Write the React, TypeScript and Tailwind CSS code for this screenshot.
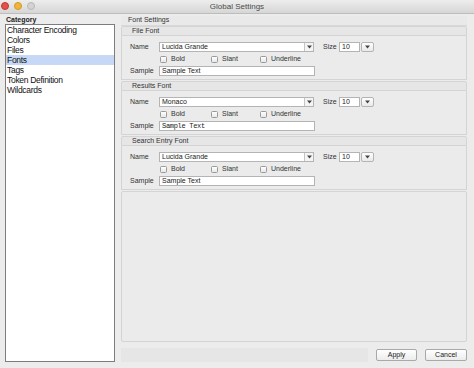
import React from 'react';

const categories = ['Character Encoding', 'Colors', 'Files', 'Fonts', 'Tags', 'Token Definition', 'Wildcards'];

const sections = [
  { title: 'File Font', font: 'Lucida Grande', mono: false },
  { title: 'Results Font', font: 'Monaco', mono: true },
  { title: 'Search Entry Font', font: 'Lucida Grande', mono: false },
];

const Arrow = () => (
  <svg width="5" height="4" viewBox="0 0 5 4">
    <path d="M0 0.5 L5 0.5 L2.5 3.5 Z" fill="#444" />
  </svg>
);

const Check = ({ label }: { label: string }) => (
  <div className="flex items-center gap-[4px]">
    <div className="w-[7px] h-[7px] rounded-[1.5px] border border-[#9a9a9a] bg-gradient-to-b from-white to-[#e8e8e8]" />
    <span className="text-[7px] text-[#333]">{label}</span>
  </div>
);

const FontSection = ({ title, font, mono }: { title: string; font: string; mono: boolean }) => (
  <div className="flex flex-col">
    <div className="h-[10px] flex items-center pl-[10px] border border-[#d4d4d4] rounded-t-[2px] bg-[#e6e6e6] text-[7px] text-[#333]">
      {title}
    </div>
    <div className="h-[44px] flex flex-col pt-[6px] pl-[8px] border border-t-0 border-[#d4d4d4] bg-[#ebebeb]">
      {/* name + size */}
      <div className="h-[10px] flex items-center">
        <span className="w-[29px] text-[7px] text-[#333]">Name</span>
        <div className="w-[155px] h-[10px] flex bg-white border border-[#b4b4b4]">
          <span className="flex-1 text-[7px] leading-[8px] pl-[2px] text-[#222]">{font}</span>
          <div className="w-[9px] flex items-center justify-center border-l border-[#c4c4c4] bg-[#f4f4f4]">
            <Arrow />
          </div>
        </div>
        <span className="ml-[9px] w-[16px] text-[7px] text-[#333]">Size</span>
        <div className="w-[21px] h-[10px] bg-white border border-[#b4b4b4] text-[7px] leading-[8px] pl-[2px] text-[#222]">10</div>
        <div className="ml-[1px] w-[13px] h-[10px] flex items-center justify-center rounded-[2px] border border-[#b4b4b4] bg-gradient-to-b from-white to-[#e9e9e9]">
          <Arrow />
        </div>
      </div>
      {/* style toggles */}
      <div className="h-[14px] flex items-center pl-[30px] pt-[1px]">
        <div className="w-[51px]"><Check label="Bold" /></div>
        <div className="w-[49px]"><Check label="Slant" /></div>
        <Check label="Underline" />
      </div>
      {/* sample */}
      <div className="h-[10px] flex items-center">
        <span className="w-[29px] text-[7px] text-[#333]">Sample</span>
        <div
          className={`w-[156px] h-[10px] bg-white border border-[#b4b4b4] text-[7px] leading-[8px] pl-[2px] text-[#222] ${
            mono ? "font-['Liberation_Mono'] tracking-[-0.3px]" : ''
          }`}
        >
          Sample Text
        </div>
      </div>
    </div>
  </div>
);

export default function App() {
  return (
    <div className="w-[474px] h-[368px] flex flex-col overflow-hidden bg-[#ececec] font-['Liberation_Sans',sans-serif]">
      {/* title bar */}
      <div className="relative h-[14px] flex items-center justify-center bg-gradient-to-b from-[#ededed] to-[#d6d6d6] border-b border-[#bdbdbd]">
        <div className="absolute left-[1px] top-[2px] flex gap-[5px]">
          <div className="w-[8px] h-[8px] rounded-full bg-[#e2534b] border border-[#c0392f]" />
          <div className="w-[8px] h-[8px] rounded-full bg-[#f1b43a] border border-[#d39a24]" />
          <div className="w-[8px] h-[8px] rounded-full bg-[#d3d3d3] border border-[#b8b8b8]" />
        </div>
        <span className="text-[8px] text-[#4a4a4a]">Global Settings</span>
      </div>

      <div className="flex-1 flex gap-[6px] pt-[2px] pl-[5px] pr-[7px] pb-[6px]">
        {/* category list */}
        <div className="w-[110px] flex flex-col">
          <div className="h-[8px] text-[7px] leading-[8px] font-bold text-[#222] pl-[1px]">Category</div>
          <div className="flex-1 bg-white border border-[#7d7d7d]">
            {categories.map((c) => (
              <div
                key={c}
                className={`h-[10px] leading-[10px] text-[8.5px] tracking-[-0.3px] pl-[1px] text-[#111] ${c === 'Fonts' ? 'bg-[#c6d8f5]' : ''}`}
              >
                {c}
              </div>
            ))}
          </div>
        </div>

        {/* font settings */}
        <div className="flex-1 flex flex-col">
          <div className="h-[10px] flex items-center pl-[7px] bg-[#e9e9e9] border-b border-[#d9d9d9] text-[7px] text-[#333]">
            Font Settings
          </div>
          <div className="flex flex-col gap-[1px]">
            {sections.map((s) => (
              <FontSection key={s.title} {...s} />
            ))}
          </div>
          <div className="flex-1 mt-[1px] border border-[#d4d4d4] rounded-[2px] bg-[#ebebeb]" />
          <div className="mt-[6px] h-[14px] flex items-center gap-[8px]">
            <div className="flex-1 h-[14px] bg-[#e6e6e6]" />
            <button className="w-[41px] h-[12px] rounded-[2px] border border-[#a9a9a9] bg-gradient-to-b from-white to-[#ececec] text-[7px] text-[#222]">
              Apply
            </button>
            <button className="w-[42px] h-[12px] rounded-[2px] border border-[#a9a9a9] bg-gradient-to-b from-white to-[#ececec] text-[7px] text-[#222]">
              Cancel
            </button>
          </div>
        </div>
      </div>
    </div>
  );
}
